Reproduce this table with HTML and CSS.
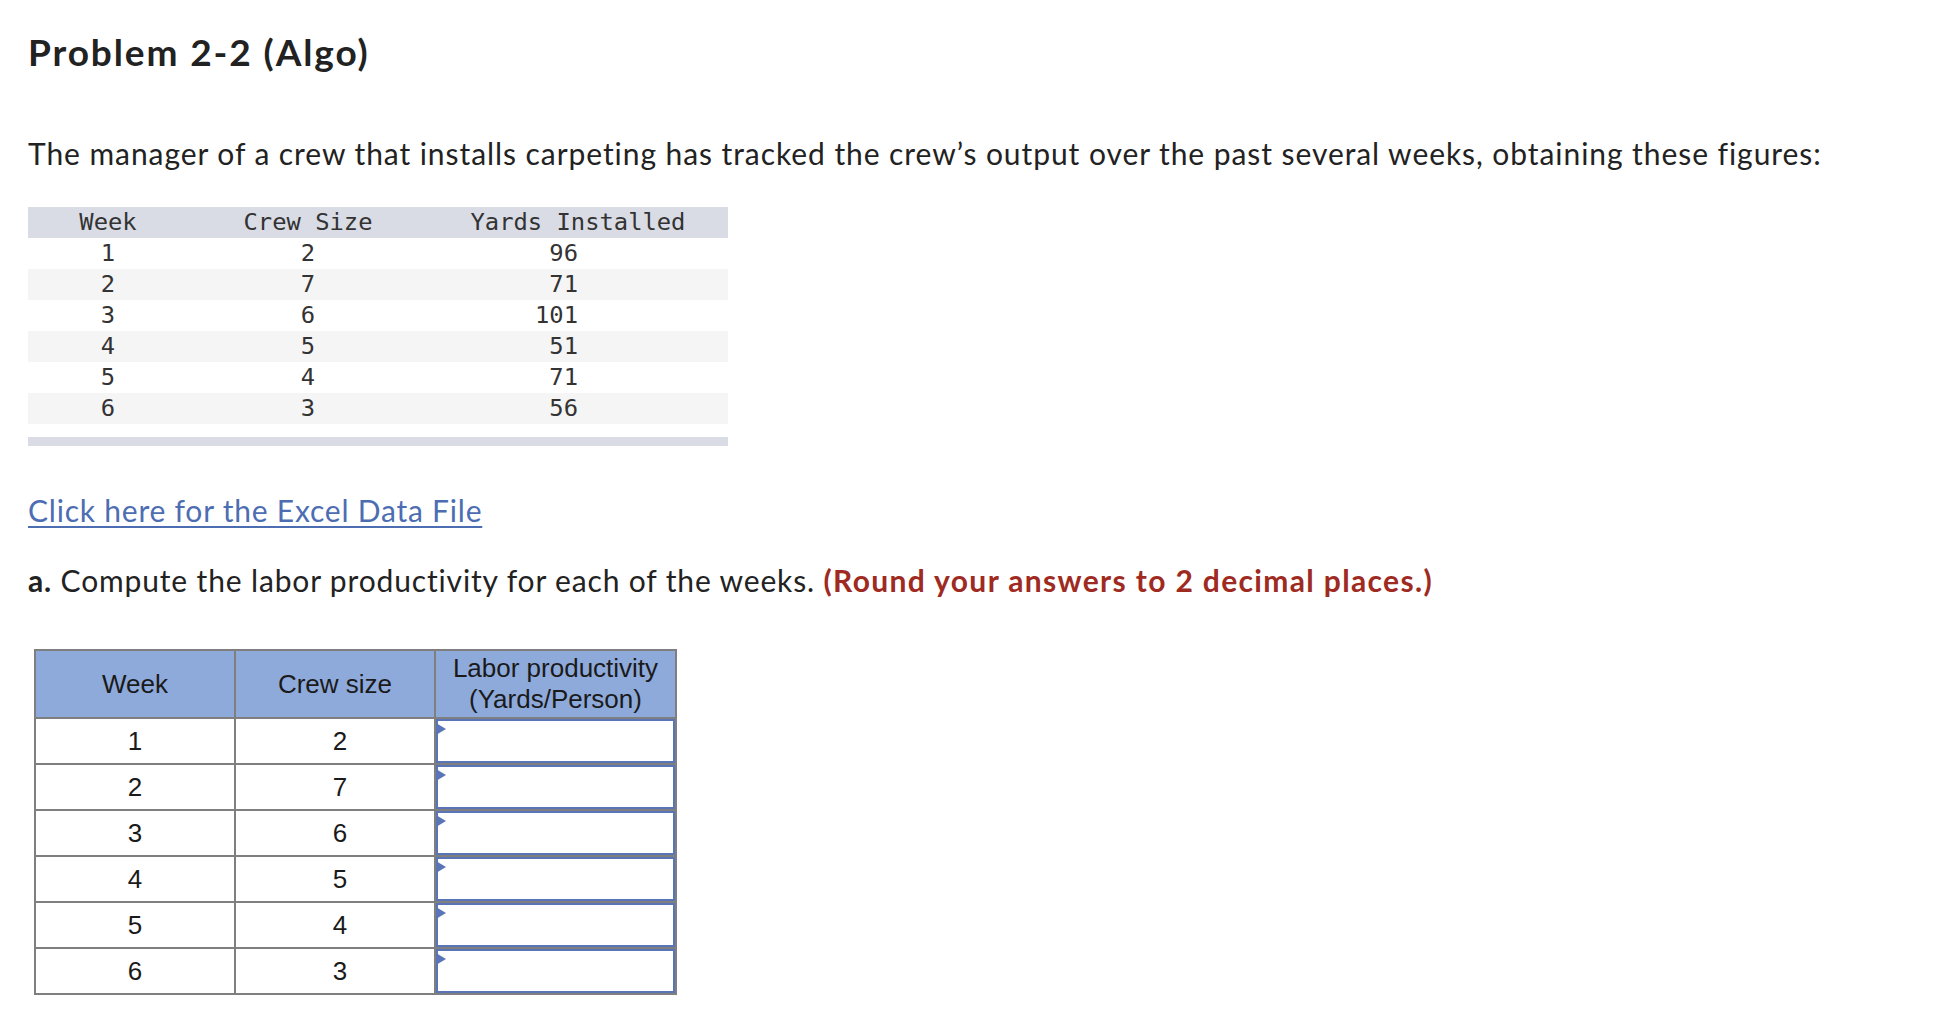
FILE: index.html
```html
<!DOCTYPE html>
<html lang="en">
<head>
<meta charset="utf-8">
<title>Problem 2-2 (Algo)</title>
<link rel="stylesheet" href="styles.css">
</head>
<body>
<main class="page">
  <h1 class="title">Problem 2-2 (Algo)</h1>
  <p class="intro">The manager of a crew that installs carpeting has tracked the crew’s output over the past several weeks, obtaining these figures:</p>

  <table class="data">
    <colgroup><col class="c1"><col class="c2"><col class="c3"></colgroup>
    <thead>
      <tr><th>Week</th><th>Crew Size</th><th>Yards Installed</th></tr>
    </thead>
    <tbody>
      <tr><td>1</td><td>2</td><td class="num">96</td></tr>
      <tr class="alt"><td>2</td><td>7</td><td class="num">71</td></tr>
      <tr><td>3</td><td>6</td><td class="num">101</td></tr>
      <tr class="alt"><td>4</td><td>5</td><td class="num">51</td></tr>
      <tr><td>5</td><td>4</td><td class="num">71</td></tr>
      <tr class="alt"><td>6</td><td>3</td><td class="num">56</td></tr>
    </tbody>
  </table>
  <div class="data-foot"></div>

  <p class="link-line"><a class="excel-link" href="#">Click here for the Excel Data File</a></p>

  <p class="question"><b>a.</b> Compute the labor productivity for each of the weeks. <strong class="hint">(Round your answers to 2 decimal places.)</strong></p>

  <table class="answer">
    <colgroup><col class="a1"><col class="a2"><col class="a3"></colgroup>
    <thead>
      <tr><th>Week</th><th>Crew size</th><th>Labor productivity<br>(Yards/Person)</th></tr>
    </thead>
    <tbody>
      <tr><td>1</td><td class="cs">2</td><td class="inp"><div class="box"></div><span class="flag"></span></td></tr>
      <tr><td>2</td><td class="cs">7</td><td class="inp"><div class="box"></div><span class="flag"></span></td></tr>
      <tr><td>3</td><td class="cs">6</td><td class="inp"><div class="box"></div><span class="flag"></span></td></tr>
      <tr><td>4</td><td class="cs">5</td><td class="inp"><div class="box"></div><span class="flag"></span></td></tr>
      <tr><td>5</td><td class="cs">4</td><td class="inp"><div class="box"></div><span class="flag"></span></td></tr>
      <tr><td>6</td><td class="cs">3</td><td class="inp"><div class="box"></div><span class="flag"></span></td></tr>
    </tbody>
  </table>
</main>
</body>
</html>
```

FILE: styles.css
```css
html, body {
  margin: 0;
  padding: 0;
  background: #ffffff;
}

.page {
  padding: 32px 0 0 28px;
  font-family: "Lato", "Noto Sans", sans-serif;
  color: #222222;
}

.title {
  margin: 0;
  font-size: 37px;
  line-height: 40px;
  font-weight: 700;
  letter-spacing: 1.9px;
  color: #222222;
}

.intro {
  margin: 61px 0 0 0;
  font-size: 30px;
  line-height: 40px;
  font-weight: 400;
  letter-spacing: 0.93px;
}

.data {
  margin-top: 34px;
  border-collapse: collapse;
  border-spacing: 0;
  table-layout: fixed;
  width: 700px;
  font-family: "DejaVu Sans Mono", "Liberation Mono", monospace;
  font-size: 23.8px;
  color: #333333;
}

.data .c1 { width: 160px; }
.data .c2 { width: 240px; }
.data .c3 { width: 300px; }

.data th, .data td {
  height: 31px;
  padding: 0;
  font-weight: 400;
  line-height: 31px;
  text-align: center;
  white-space: nowrap;
}

.data thead tr {
  background: #d9dce5;
}

.data .alt {
  background: #f5f5f5;
}

.data td.num {
  text-align: right;
  padding-right: 150px;
}

.data-foot {
  width: 700px;
  height: 9px;
  margin-top: 13px;
  background: #d9dce5;
}

.link-line {
  margin: 44px 0 0 0;
  font-size: 30px;
  line-height: 40px;
  letter-spacing: 0.78px;
}

.excel-link {
  color: #4d6db3;
  text-decoration: underline;
  text-decoration-thickness: 2px;
  text-underline-offset: 4px;
}

.question {
  margin: 30px 0 0 0;
  font-size: 30px;
  line-height: 40px;
  letter-spacing: 0.85px;
}

.question b {
  font-weight: 700;
}

.hint {
  color: #9e2a22;
  font-weight: 700;
  letter-spacing: 1.35px;
}

.answer {
  margin: 49px 0 0 6px;
  border-collapse: separate;
  border-spacing: 0;
  table-layout: fixed;
  width: 641px;
  border-top: 2px solid #7f7f7f;
  border-left: 2px solid #7f7f7f;
  font-family: "Liberation Sans", Arial, sans-serif;
  font-size: 26px;
  color: #1a1a1a;
}

.answer .a1 { width: 200px; }
.answer .a2 { width: 200px; }
.answer .a3 { width: 241px; }

.answer th, .answer td {
  border-right: 2px solid #7f7f7f;
  border-bottom: 2px solid #7f7f7f;
  padding: 0;
  text-align: center;
  font-weight: 400;
}

.answer th {
  height: 66px;
  background: #8eaadb;
  line-height: 31px;
}

.answer td {
  height: 44px;
  line-height: 44px;
}

.answer td.cs {
  padding-left: 10px;
}

.answer td.inp {
  position: relative;
  padding: 0;
}

.box {
  height: 40px;
  border: 2px solid #5a75b7;
  background: #ffffff;
}

.flag {
  position: absolute;
  top: 4px;
  left: 0;
  width: 0;
  height: 0;
  border-left: 10px solid #5a75b7;
  border-top: 6px solid transparent;
  border-bottom: 6px solid transparent;
}
```
